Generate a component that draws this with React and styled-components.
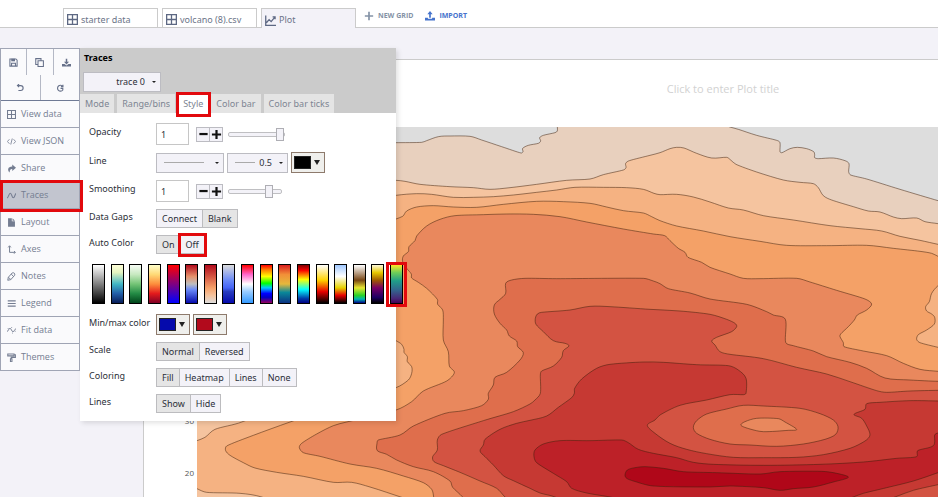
import React from "react";
import styled, { createGlobalStyle, css } from "styled-components";

const GlobalStyle = createGlobalStyle`
  *, *::before, *::after { box-sizing: border-box; }
  body {
    margin: 0;
    background: #f3f2f8;
    color: #2b2f38;
    font-family: "Noto Sans", "Open Sans", sans-serif;
    font-size: 9px;
    line-height: 14px;
    overflow: hidden;
  }
  button, input, select { font: inherit; color: inherit; margin: 0; border-radius: 0; }
  button { cursor: pointer; }
`;

/* ---------- icons ---------- */

const Glyph = styled.svg`
  flex: none;
  width: ${(p) => p.$size || 10}px;
  height: ${(p) => p.$size || 10}px;
  fill: none;
  stroke: currentColor;
  stroke-width: 1.4;
`;

const shapes = {
  grid: <path d="M.7 .7h10.6v10.6H.7zM6 .7v10.6M.7 6h10.6" />,
  chart: <path d="M.8 .5v10.7H12M1.5 8.5 4.5 5l2.2 2.2L11 2M8.3 2H11v2.6" />,
  plus: <path d="M6 1v10M1 6h10" strokeWidth="2" />,
  increase: <path d="M6 1v10M1 6h10" strokeWidth="2.4" />,
  decrease: <path d="M1.5 5.5h9" strokeWidth="2.4" />,
  upload: (
    <g fill="currentColor" stroke="none">
      <path d="M6 0 9.2 3.8H7V8H5V3.8H2.8z" />
      <path d="M0 8h3.5v1.4h5V8H12v3.5H0z" />
    </g>
  ),
  download: (
    <g fill="currentColor" stroke="none">
      <path d="M5 1h2v4h2.4L6 8.6 2.6 5H5z" />
      <path d="M0 8h3.4L6 10l2.6-2H12v3.4H0z" />
    </g>
  ),
  save: (
    <g>
      <path d="M1.2 1.2h8l1.6 1.6v8H1.2zM3.4 10.6V7h5.2v3.6" />
      <path d="M3 1h5v3.4H3z" fill="currentColor" stroke="none" />
    </g>
  ),
  copy: <path d="M4 3.6h7.2v7.8H4zM4 8.6H1V.8h7v2.6" />,
  undo: <path d="M2 2.4h5a3.6 3.6 0 0 1 0 7.4H3.6M4.6 .2 2.2 2.4l2.4 2.4" strokeWidth="1.7" />,
  redo: <path d="M10.200 3.600A4.400 4.400 0 1 0 10.200 9V6.600H6.800M10.400 1v3H7.400" strokeWidth="1.700" />,
  code: <path d="M3.2 3 .6 6l2.6 3M8.8 3l2.6 3-2.6 3M7 2 5 10" strokeWidth="1.1" />,
  share: (
    <path d="M7 .5 12 5 7 9.2V6.6C4.5 6.4 3.4 8 3.6 11.4.2 8 .8 3.4 7 3.2z" fill="currentColor" stroke="none" />
  ),
  traces: <path d="M0 9.4C2 9 2.4 3 4.4 3s2 6 4 6S10.4 4.6 12 3" />,
  page: (
    <path d="M1.4 .4h5v4h4.2v7.2H1.4zM7.4 .4l3.2 3.2H7.4z" fill="currentColor" stroke="none" />
  ),
  axes: <path d="M3.4 1.6v8.2h7.4M1.6 3.2 3.4 1l1.8 2.2M9.4 8l1.8 1.8-1.8 1.8" strokeWidth="1.3" />,
  pencil: <path d="M1 11l.8-4L7 1.2c2-1 4.2 1 3.2 3.2L5 10.2zM5.6 2.8l3.4 3.4M2 7l3 3" strokeWidth="1.3" />,
  bars: <path d="M1 2.400h10.600M1 6h10.600M1 9.600h10.600" strokeWidth="1.600" />,
  fit: (
    <path d="M0 7.4C2 7 2.2 3 4 3s2 4.6 4 4.6S10 4 12 3.6M1 3.4h1M5.8 2h1M7 9.4h1M10.4 7h1" strokeWidth="1.2" />
  ),
  roller: <path d="M1 1.2h8.4v2.6H1zM9.4 2.4h1.8v3.4H5.6v1.8M4.6 7.6h2v4h-2z" strokeWidth="1.4" />,
};

const Icon = ({ name, size }) => (
  <Glyph viewBox="0 0 12 12" $size={size} aria-hidden="true">
    {shapes[name]}
  </Glyph>
);

/* ---------- top bar ---------- */

const TopBar = styled.header`
  display: flex;
  align-items: flex-end;
  gap: 4px;
  height: 28px;
  padding-left: 63px;
  background: #fff;
  border-bottom: 1px solid #cbcbcb;
`;

const FileTab = styled.button`
  display: flex;
  align-items: center;
  gap: 3px;
  width: 95px;
  height: 19px;
  padding: 3px 3px 0;
  border: 1px solid #cbcbcb;
  border-bottom: 0;
  background: #fff;
  color: #6b7488;
  white-space: nowrap;
  svg { color: #5d6883; }
  ${(p) =>
    p.$active &&
    css`
      height: 20px;
      margin-bottom: -1px;
      background: #f3f2f8;
    `}
`;

const BarAction = styled.button`
  display: flex;
  align-items: center;
  gap: 4px;
  height: 23px;
  margin-left: ${(p) => (p.$first ? 4 : 8)}px;
  padding: 0;
  border: 0;
  background: none;
  color: ${(p) => p.$color};
  font-family: "Open Sans", sans-serif;
  font-size: 7px;
  font-weight: 700;
`;

/* ---------- sidebar ---------- */

const Workspace = styled.main`
  position: relative;
  display: flex;
  align-items: flex-start;
`;

const Sidebar = styled.nav`
  flex: none;
  position: relative;
  z-index: 3;
  width: 80px;
  margin-top: 20px;
  border: 1px solid #a0a5b5;
  background: #fafafc;
`;

const ToolRow = styled.div`
  display: flex;
  height: 26px;
  &:last-of-type { border-bottom: 1px solid #6f7a95; }
`;

const ToolButton = styled.button`
  flex: 1;
  display: flex;
  align-items: center;
  justify-content: center;
  padding: 0;
  border: 0;
  background: none;
  color: #67718a;
  & + & { border-left: 1px solid #b4b8c5; }
`;

const MenuItem = styled.button`
  position: relative;
  display: flex;
  align-items: center;
  gap: 5px;
  width: 100%;
  height: 27px;
  padding: 0 6px;
  border: 0;
  border-bottom: 1px solid #9fa4b4;
  background: ${(p) => (p.$active ? "#c2c5cf" : "none")};
  color: #747d91;
  font-family: "Open Sans", sans-serif;
  text-align: left;
  &:last-child {
    height: 26px;
    border-bottom: 0;
  }
`;

const marked = css`
  position: relative;
  &::after {
    content: "";
    position: absolute;
    z-index: 2;
    border: 3px solid #e2090d;
    pointer-events: none;
    inset: ${(p) => p.$mark};
  }
`;

const MarkedMenuItem = styled(MenuItem)`${marked}`;

/* ---------- panel ---------- */

const Panel = styled.section`
  position: absolute;
  z-index: 2;
  top: 20px;
  left: 80px;
  width: 316px;
  background: #fff;
  box-shadow: 2px 2px 5px rgba(0, 0, 0, 0.12);
`;

const PanelHead = styled.div`
  height: 65px;
  background: #cbcbcb;
`;

const PanelTitle = styled.h2`
  margin: 0;
  padding: 3px 4px 7px;
  color: #000;
  font-size: 9px;
  line-height: 14px;
`;

const SelectBox = styled.label`
  position: relative;
  display: block;
  width: ${(p) => p.$width}px;
  height: 20px;
  &::after {
    content: "";
    position: absolute;
    right: 5px;
    top: 9px;
    border: 2px solid transparent;
    border-top-color: #222;
    pointer-events: none;
  }
  svg {
    position: absolute;
    left: 8px;
    top: 9px;
    height: 2px;
    width: ${(p) => p.$rule}px;
    pointer-events: none;
  }
`;

const Select = styled.select`
  appearance: none;
  display: block;
  width: 100%;
  height: 100%;
  padding: 0 15px 0 0;
  border: 1px solid #bcbcc2;
  background: #f3f2f8;
  text-align: right;
  text-align-last: right;
`;

const TraceSelect = styled(SelectBox)`margin-left: 3px;`;

const TabStrip = styled.div`
  display: flex;
  gap: 3px;
  margin-top: 2px;
`;

const PanelTab = styled.button`
  height: 19px;
  padding: 0 5px;
  border: 0;
  background: ${(p) => (p.$active ? "#fff" : "#e4e4e4")};
  color: #7d8592;
  white-space: nowrap;
  ${(p) => p.$mark && marked}
`;

const Form = styled.div`
  display: flex;
  flex-direction: column;
  gap: 7px;
  padding: 10px 0 8px;
`;

const Row = styled.div`
  display: flex;
  align-items: center;
  gap: 3px;
  height: ${(p) => p.$height || 19}px;
  padding-left: 9px;
`;

const RowLabel = styled.span`
  flex: none;
  width: 64px;
  padding-bottom: 4px;
  white-space: nowrap;
`;

const NumberBox = styled.input`
  width: 33px;
  height: 22px;
  margin-right: 4px;
  padding: 0 4px;
  border: 1px solid #c6c6c6;
  background: #fff;
`;

const Stepper = styled.div`
  display: flex;
  margin-right: 2px;
  border: 1px solid #bcbcc2;
`;

const StepButton = styled.button`
  display: flex;
  align-items: center;
  justify-content: center;
  width: 12px;
  height: 13px;
  padding: 0;
  border: 0;
  background: #f3f2f8;
  color: #111;
  & + & {
    width: 13px;
    border-left: 1px solid #bcbcc2;
  }
`;

const Slider = styled.input`
  appearance: none;
  width: ${(p) => p.$width}px;
  height: 14px;
  background: none;
  &::-webkit-slider-runnable-track {
    height: 5px;
    border: 1px solid #bfbfc2;
    border-radius: 2px;
    background: #f3f2f8;
  }
  &::-webkit-slider-thumb {
    appearance: none;
    width: 8px;
    height: 13px;
    margin-top: -5px;
    border: 1px solid #aeaeb4;
    background: #f3f2f8;
  }
`;

const ColorButton = styled.button`
  display: flex;
  align-items: center;
  justify-content: space-between;
  width: 34px;
  height: 21px;
  padding: 0 4px 0 2px;
  border: 1px solid #8d7a6c;
  background: #efefec;
  &::before {
    content: "";
    width: 17px;
    height: 13px;
    border: 1px solid #222;
    background: ${(p) => p.$color};
  }
  &::after {
    content: "";
    margin-bottom: 1px;
    border: 3px solid transparent;
    border-top: 5px solid #222;
    border-bottom: 0;
  }
`;

const Segments = styled.div`
  display: flex;
  height: 19px;
`;

const Segment = styled.button`
  height: 19px;
  padding: 0 5px;
  border: 1px solid #bcbcbf;
  background: ${(p) => (p.$on ? "#e5e5e5" : "#f3f2f8")};
  white-space: nowrap;
  & + & { margin-left: -1px; }
  ${(p) => p.$mark && marked}
`;

const Scales = styled.div`
  display: flex;
  justify-content: space-between;
  width: 311px;
  margin: 3px 0 3px 12px;
`;

const Scale = styled.button`
  width: 13px;
  height: 40px;
  padding: 0;
  border: 1px solid #000;
  background: linear-gradient(${(p) => p.$colors});
  ${(p) => p.$mark && marked}
`;

/* ---------- plot ---------- */

const Paper = styled.section`
  flex: 1;
  min-width: 0;
  margin: 31px 0 0 63px;
  border-top: 1px solid #cbcbcb;
  border-left: 1px solid #cbcbcb;
  background: #fff;
`;

const PlotTitle = styled.h1`
  margin: 0 0 0 364px;
  padding: 21px 0 30px;
  text-align: center;
  width: 430px;
  max-width: calc(100% - 364px);
  color: #d2d2d2;
  font-family: "Open Sans", sans-serif;
  font-size: 11px;
  font-weight: 400;
  line-height: 16px;
`;

const PlotBody = styled.div`
  display: flex;
  align-items: flex-start;
`;

const Axis = styled.div`
  flex: none;
  width: 53px;
  padding: 268px 3px 0 0;
  color: #555;
  font-family: "Open Sans", sans-serif;
  font-size: 8px;
  line-height: 52px;
  text-align: right;
`;

const Contour = styled.svg`
  flex: 1;
  min-width: 0;
  display: block;
  aspect-ratio: 2223 / 1110;
  stroke: rgba(60, 30, 10, 0.5);
  stroke-width: 3;
  stroke-linejoin: round;
`;

const tile = (dx, dy) => (...pts) => pts.map(([x, y]) => [x + dx, y + dy]);
const nw = tile(579, -21);
const ne = tile(1389, -21);
const sw = tile(-201, 549);
const se = tile(999, 549);

const smooth = (pts, closed) => {
  const n = pts.length;
  const at = (i) => (closed ? pts[(i + n) % n] : pts[Math.max(0, Math.min(n - 1, i))]);
  let d = `M${pts[0]}`;
  for (let i = 0; i < (closed ? n : n - 1); i++) {
    const [a, b, c, e] = [at(i - 1), at(i), at(i + 1), at(i + 2)];
    const len = Math.hypot(c[0] - b[0], c[1] - b[1]);
    const handle = (p, q, s) => {
      const v = [q[0] - p[0], q[1] - p[1]];
      const k = (s * Math.min(len / 3, Math.hypot(...v) / 6)) / (Math.hypot(...v) || 1);
      return [v[0] * k, v[1] * k];
    };
    const h1 = handle(a, c, 1);
    const h2 = handle(b, e, -1);
    d += `C${b[0] + h1[0]} ${b[1] + h1[1]} ${c[0] + h2[0]} ${c[1] + h2[1]} ${c}`;
  }
  return d;
};

const R = 2260;
const B = 1150;
const L = -40;
const T = -40;

const regions = [
  {
    fill: "#dddddd",
    line: nw([-20, 68], [18, 68], [95, 67], [110, 62], [145, 50], [180, 48], [240, 49], [275, 60], [335, 80], [393, 99], [399, 95], [398, 85], [415, 76], [445, 70], [452, 63], [449, 53], [460, 46], [495, 38], [502, 33], [502, 21], [502, 0]),
    close: [[500, T]],
  },
  {
    fill: "#dddddd",
    line: ne([190, 14], [210, 21], [235, 28], [290, 46], [350, 61], [360, 68], [360, 95], [366, 98], [390, 86], [412, 82], [440, 86], [461, 95], [464, 104], [464, 113], [475, 116], [520, 114], [555, 122], [567, 131], [566, 155], [572, 165], [620, 177], [720, 208], [834, 242], [870, 252]),
    close: [[R, T]],
  },
  {
    fill: "#f5c49f",
    line: [
      ...nw([-20, 181], [18, 181], [45, 184], [90, 193], [180, 200], [250, 203], [300, 208], [360, 203], [440, 193], [530, 181], [600, 177], [640, 164], [700, 150], [708, 143], [707, 130], [718, 122], [780, 106]),
      ...ne([0, 98], [30, 86], [50, 82], [72, 84], [110, 100], [155, 114], [200, 112], [212, 120], [228, 133], [290, 156], [370, 180], [420, 187], [460, 191], [475, 203], [490, 227], [515, 240], [580, 260], [625, 273], [660, 276], [700, 291], [725, 296], [770, 294], [795, 305], [834, 311], [870, 318]),
    ],
    close: [[R, B], [L, B], [L, 160]],
  },
  {
    fill: "#f5b282",
    line: [
      ...sw([160, 410], [201, 392], [225, 382], [255, 358], [335, 336], [400, 300]),
      ...nw([-60, 240], [18, 226], [80, 221], [125, 223], [190, 232], [250, 232], [310, 230], [370, 225], [440, 217], [500, 210], [555, 202], [640, 202], [710, 203], [760, 208], [792, 220]),
      ...ne([0, 224], [50, 223], [100, 231], [150, 246], [205, 264], [250, 270], [310, 287], [400, 300], [510, 317], [600, 326], [665, 333], [720, 349], [780, 361], [834, 373], [870, 380]),
    ],
    close: [[R, B], [L, B]],
  },
  {
    fill: "#f5c49f",
    line: sw([160, 515], [201, 536], [230, 547], [330, 550], [395, 561], [460, 590]),
    close: [[L, B]],
  },
  {
    fill: "#f4a167",
    line: [
      ...sw([900, 590], [812, 561], [770, 547], [720, 531], [665, 517], [610, 517], [520, 499], [440, 487], [375, 474], [340, 458], [300, 436], [287, 422], [290, 408], [370, 376], [480, 336], [640, 280], [798, 233], [835, 210], [845, 190], [845, 170], [832, 155], [832, 140], [822, 127], [822, 118], [815, 103], [798, 92], [770, 75]),
      ...nw([-20, 350], [0, 310], [18, 297], [38, 289], [50, 273], [80, 261], [130, 257], [190, 261], [260, 262], [340, 253], [440, 244], [520, 245], [600, 250], [650, 261], [700, 272], [760, 279], [785, 290]),
      ...ne([0, 302], [50, 318], [130, 333], [210, 350], [300, 364], [380, 376], [500, 377], [620, 376], [700, 385], [780, 394], [815, 400], [834, 409], [860, 420]),
    ],
    close: [[R, B]],
  },
  {
    fill: "#f5b282",
    line: [
      ...ne([870, 470], [834, 497], [815, 520], [808, 545], [797, 560], [800, 573]),
      ...se([1205, 12], [1214, 22], [1213, 42], [1190, 60], [1165, 74], [1160, 88], [1170, 98], [1224, 112], [1260, 120]),
    ],
    close: [],
  },
  {
    fill: "#e9885d",
    line: [
      ...sw([915, 590], [911, 561], [905, 538], [880, 518], [820, 498], [740, 475], [660, 462], [570, 439], [520, 428], [508, 413], [515, 400], [560, 372], [610, 347], [650, 336], [798, 300], [845, 275], [880, 243], [950, 213], [973, 188], [958, 168], [955, 125], [940, 90], [940, 30]),
      ...nw([158, 570], [143, 553], [142, 538], [110, 505], [85, 487], [65, 474], [64, 462], [50, 445], [38, 425], [40, 408], [55, 395], [57, 380], [75, 362], [80, 348], [110, 318], [150, 298], [195, 287], [280, 284], [350, 282], [430, 283], [510, 290], [590, 306], [700, 327], [790, 342]),
      ...ne([14, 347], [30, 362], [55, 385], [75, 397], [84, 412], [125, 427], [150, 442], [210, 462], [250, 475], [300, 476], [410, 475], [450, 486], [530, 511], [615, 537], [635, 552], [620, 570], [592, 585]),
      ...se([973, 30], [955, 50], [932, 72], [930, 80], [940, 98], [942, 110], [1000, 123], [1070, 137], [1120, 160], [1170, 178], [1224, 184], [1260, 188]),
    ],
    close: [[R, B]],
  },
  {
    fill: "#df6e4c",
    line: [
      ...sw([1020, 590], [998, 561], [968, 532], [960, 513], [910, 485], [850, 470], [800, 450], [770, 433], [742, 422], [741, 400], [745, 390], [810, 375], [850, 348], [945, 310], [1000, 302], [1055, 287], [1075, 268], [1075, 250], [1090, 225], [1095, 202], [1130, 187], [1170, 150], [1180, 128], [1163, 110], [1160, 93], [1138, 78], [1130, 60], [1110, 40]),
      ...nw([313, 582], [313, 555], [330, 538], [347, 520], [347, 490], [365, 480], [405, 475], [500, 476], [760, 475], [790, 483]),
      ...ne([0, 491], [25, 506], [90, 519], [150, 537], [260, 553], [320, 575]),
      ...se([730, 15], [766, 28], [767, 97], [790, 107], [850, 123], [890, 140], [960, 157], [1010, 175], [1065, 204], [1140, 210], [1224, 214], [1260, 214]),
    ],
    close: [[R, B]],
  },
  {
    fill: "#d35342",
    line: [
      ...sw([1160, 590], [1125, 561], [1100, 535], [1050, 513], [990, 487], [940, 467], [912, 455], [908, 440], [922, 420], [922, 390], [935, 373], [1060, 332], [1150, 305]),
      ...se([0, 282], [15, 270], [31, 250], [31, 195], [35, 183], [70, 168], [95, 142], [100, 122], [117, 108], [105, 100], [70, 92], [40, 65], [18, 43], [16, 25], [22, 12], [35, 7]),
      ...nw([540, 570], [600, 559], [660, 560], [780, 568]),
      ...ne([60, 573], [150, 583]),
      ...se([590, 28], [615, 40], [620, 50], [605, 65], [560, 82], [545, 93], [555, 105], [570, 125], [600, 133], [700, 146], [800, 172], [890, 192], [960, 215], [1040, 242], [1070, 247], [1140, 243], [1224, 241], [1260, 241]),
    ],
    close: [[R, B]],
  },
  {
    fill: "#c63933",
    line: [
      ...se([130, 590], [75, 561], [30, 549], [0, 535]),
      ...sw([1150, 512], [1120, 497], [1090, 465], [1065, 440], [1050, 423], [1060, 405], [1065, 388], [1110, 358], [1160, 340]),
      ...se([0, 331], [50, 318], [85, 292], [125, 263], [133, 250], [134, 235], [155, 207], [200, 175], [240, 163], [340, 156], [400, 157], [500, 164], [595, 167], [625, 180], [648, 205], [648, 250], [640, 254], [600, 254], [530, 270], [450, 286], [390, 315], [375, 330], [352, 346], [375, 370], [420, 400], [470, 418], [530, 431], [610, 442], [700, 443], [800, 442], [880, 434], [960, 415], [1005, 393], [1020, 375], [1010, 348], [995, 325], [972, 313], [1005, 298], [1010, 281], [1050, 277], [1140, 272], [1224, 273], [1260, 273]),
    ],
    close: [[R, B]],
  },
  {
    fill: "#d35342",
    line: se([1040, 580], [1095, 561], [1150, 541], [1224, 524], [1260, 516]),
    close: [[R, B]],
  },
  {
    fill: "#bd2128",
    line: se([930, 575], [970, 561], [1000, 550], [1070, 533], [1150, 513], [1224, 488], [1275, 470], [1275, 360], [1224, 369], [1214, 375], [1210, 407], [1163, 422], [1160, 440], [1100, 445], [1000, 456], [870, 463], [700, 466], [550, 463], [490, 457], [440, 443], [370, 430], [325, 418], [295, 398], [275, 390], [180, 392], [90, 392], [40, 402], [15, 420], [12, 440], [20, 458], [70, 490], [110, 515], [125, 535], [170, 549], [240, 561], [330, 580]),
    close: [[1400, B], [1900, B]],
  },
  {
    fill: "#b00719",
    loop: true,
    line: se([285, 495], [292, 480], [315, 473], [345, 470], [400, 475], [460, 485], [560, 488], [690, 492], [750, 485], [875, 484], [920, 490], [955, 502], [910, 516], [850, 531], [790, 536], [750, 541], [700, 533], [600, 528], [540, 531], [370, 528], [310, 513], [290, 505]),
  },
  {
    fill: "#df6e4c",
    loop: true,
    line: se([490, 352], [500, 332], [530, 312], [590, 297], [640, 286], [700, 288], [810, 295], [870, 311], [910, 330], [924, 350], [917, 373], [885, 388], [820, 402], [740, 409], [660, 405], [600, 402], [540, 388], [500, 370]),
  },
  {
    fill: "#e9885d",
    loop: true,
    line: se([633, 346], [645, 335], [680, 325], [745, 326], [765, 336], [800, 358], [775, 361], [700, 365], [660, 357]),
  },
];

const regionPath = ({ line, close = [], loop }) =>
  smooth(line, loop) + close.map((p) => `L${p}`).join("") + "Z";

/* ---------- data ---------- */

const menu = [
  ["View data", "grid"],
  ["View JSON", "code"],
  ["Share", "share"],
  ["Traces", "traces"],
  ["Layout", "page"],
  ["Axes", "axes"],
  ["Notes", "pencil"],
  ["Legend", "bars"],
  ["Fit data", "fit"],
  ["Themes", "roller"],
];

const scales = [
  ["Greys", "#fff, #000"],
  ["YlGnBu", "#ffffd9, #e4f4c0 20%, #41b6c4 50%, #225ea8 75%, #081d58"],
  ["Greens", "#f7fcf5, #c7e9c0 25%, #74c476 50%, #238b45 75%, #00441b"],
  ["YlOrRd", "#ffffcc, #fed976 25%, #fd8d3c 50%, #e31a1c 75%, #800026"],
  ["Bluered", "#f00, #00f"],
  ["RdBu", "#b20a1c, #e6916a 30%, #bebebe 50%, #6a89f7 65%, #050aac"],
  ["Reds", "#b20a1c, #f5a069 60%, #f5c39d 80%, #dcdcdc"],
  ["Blues", "#dcdcdc, #6a89f7 40%, #4664f5 60%, #283cbe 70%, #050aac"],
  ["Picnic", "#f00, #ff66cc 25%, #fff 50%, #99ccff 70%, #3399ff"],
  ["Rainbow", "#f00, #ff7800 12%, #ff0 30%, #0f0 48%, #00c8ff 60%, #00f 75%, #0000c8 85%, #96005a"],
  ["Portland", "#d91e1e, #f28f38 25%, #e6b83c 50%, #0a8899 72%, #0c3383"],
  ["Jet", "#800000, #fa0000 14%, #ff0 38%, #05ffff 64%, #003caa 88%, #000083"],
  ["Hot", "#fff, #ffd200 40%, #e60000 70%, #000"],
  ["Blackbody", "#a0c8ff, #fff 30%, #e6d200 60%, #e60000 80%, #000"],
  ["Earth", "#fff, #784614 40%, #e6e632 60%, #28d228 80%, #00b4b4 90%, #000082"],
  ["Electric", "#fffadc, #e6c800 20%, #a05a00 40%, #780064 60%, #1e0064 85%, #000"],
  ["Viridis", "#fde725, #6ece58 20%, #1f9e89 42%, #31688e 65%, #482878 88%, #440154"],
];

const Choice = ({ label, options, on, mark }) => (
  <Row role="group" aria-label={label}>
    <RowLabel>{label}</RowLabel>
    <Segments>
      {options.map((o) => (
        <Segment key={o} $on={o === on} aria-pressed={o === on} $mark={o === mark ? "-3px -3px -4px -3px" : undefined}>
          {o}
        </Segment>
      ))}
    </Segments>
  </Row>
);

const Amount = ({ label, width, position }) => (
  <Row $height={22}>
    <RowLabel as="label" htmlFor={label}>{label}</RowLabel>
    <NumberBox id={label} defaultValue="1" />
    <Stepper>
      <StepButton aria-label={`Decrease ${label}`}><Icon name="decrease" size={11} /></StepButton>
      <StepButton aria-label={`Increase ${label}`}><Icon name="increase" size={11} /></StepButton>
    </Stepper>
    <Slider type="range" min="0" max="100" defaultValue={position} $width={width} aria-label={`${label} slider`} />
  </Row>
);

const Rule = () => (
  <svg viewBox="0 0 10 2" preserveAspectRatio="none" aria-hidden="true">
    <path d="M0 .5h10" stroke="#aaa" />
  </svg>
);

export default function App() {
  return (
    <>
      <GlobalStyle />
      <TopBar>
        <FileTab><Icon name="grid" size={11} />starter data</FileTab>
        <FileTab><Icon name="grid" size={11} />volcano (8).csv</FileTab>
        <FileTab $active><Icon name="chart" size={11} />Plot</FileTab>
        <BarAction $first $color="#8492a6"><Icon name="plus" size={10} />NEW GRID</BarAction>
        <BarAction $color="#4573cc"><Icon name="upload" size={10} />IMPORT</BarAction>
      </TopBar>
      <Workspace>
        <Sidebar>
          <ToolRow>
            <ToolButton aria-label="Save"><Icon name="save" size={9} /></ToolButton>
            <ToolButton aria-label="Copy"><Icon name="copy" size={9} /></ToolButton>
            <ToolButton aria-label="Download"><Icon name="download" size={9} /></ToolButton>
          </ToolRow>
          <ToolRow>
            <ToolButton aria-label="Undo"><Icon name="undo" size={8} /></ToolButton>
            <ToolButton aria-label="Redo"><Icon name="redo" size={8} /></ToolButton>
          </ToolRow>
          {menu.map(([label, icon]) =>
            label === "Traces" ? (
              <MarkedMenuItem key={label} $active $mark="-2px -4px -4px -1px">
                <Icon name={icon} size={9} />{label}
              </MarkedMenuItem>
            ) : (
              <MenuItem key={label}><Icon name={icon} size={9} />{label}</MenuItem>
            )
          )}
        </Sidebar>
        <Paper>
          <PlotTitle>Click to enter Plot title</PlotTitle>
          <PlotBody>
            <Axis><div>30</div><div>20</div></Axis>
            <Contour viewBox="0 0 2223 1110" role="img" aria-label="Contour plot">
              <path d="M-40 -40H2260V1150H-40Z" fill="#e8d0be" />
              {regions.map((r, i) => (
                <path key={i} d={regionPath(r)} fill={r.fill} />
              ))}
            </Contour>
          </PlotBody>
        </Paper>
        <Panel>
          <PanelHead>
            <PanelTitle>Traces</PanelTitle>
            <TraceSelect $width={78}>
              <Select aria-label="Trace"><option>trace 0</option></Select>
            </TraceSelect>
            <TabStrip>
              <PanelTab>Mode</PanelTab>
              <PanelTab>Range/bins</PanelTab>
              <PanelTab $active $mark="-2px -3px -4px -2px">Style</PanelTab>
              <PanelTab>Color bar</PanelTab>
              <PanelTab>Color bar ticks</PanelTab>
            </TabStrip>
          </PanelHead>
          <Form>
            <Amount label="Opacity" width={57} position={100} />
            <Row $height={21}>
              <RowLabel>Line</RowLabel>
              <SelectBox $width={68} $rule={40}>
                <Select aria-label="Line style"><option value="solid" /></Select>
                <Rule />
              </SelectBox>
              <SelectBox $width={61} $rule={20}>
                <Select aria-label="Line width"><option>0.5</option></Select>
                <Rule />
              </SelectBox>
              <ColorButton aria-label="Line color" $color="#000" />
            </Row>
            <Amount label="Smoothing" width={54} position={81} />
            <Choice label="Data Gaps" options={["Connect", "Blank"]} on="Blank" />
            <Choice label="Auto Color" options={["On", "Off"]} on="On" mark="Off" />
            <Scales>
              {scales.map(([name, colors]) => (
                <Scale key={name} aria-label={name} $colors={colors} $mark={name === "Viridis" ? "-3px -5px -4px -5px" : undefined} />
              ))}
            </Scales>
            <Row $height={21}>
              <RowLabel>Min/max color</RowLabel>
              <ColorButton aria-label="Minimum color" $color="#050aac" />
              <ColorButton aria-label="Maximum color" $color="#b20a1c" />
            </Row>
            <Choice label="Scale" options={["Normal", "Reversed"]} on="Normal" />
            <Choice label="Coloring" options={["Fill", "Heatmap", "Lines", "None"]} on="Fill" />
            <Choice label="Lines" options={["Show", "Hide"]} on="Show" />
          </Form>
        </Panel>
      </Workspace>
    </>
  );
}
